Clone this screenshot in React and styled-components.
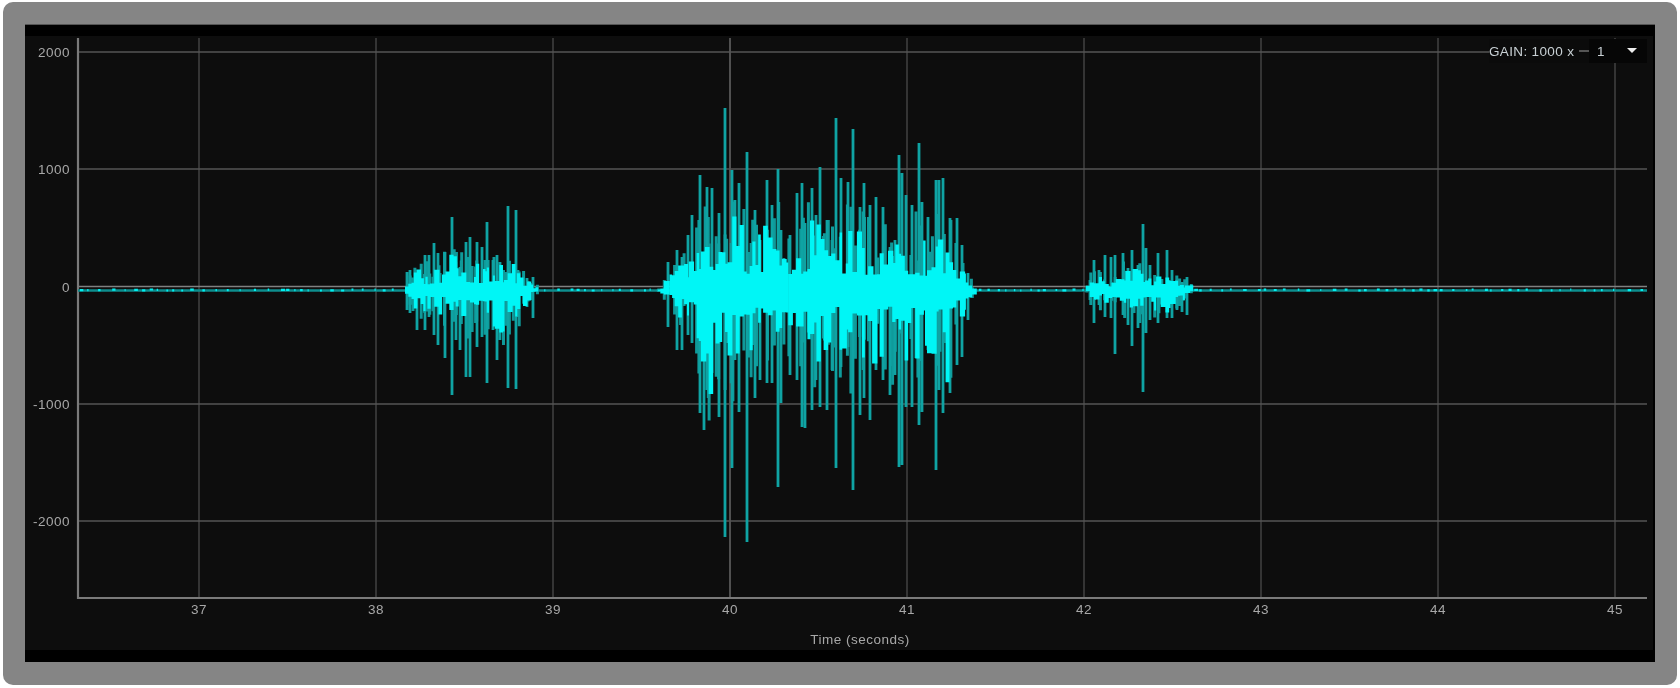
import React from "react";
import styled, { createGlobalStyle } from "styled-components";

const Global = createGlobalStyle`
  html, body { margin: 0; padding: 0; background: #fff; }
  #root { width: 1680px; height: 688px; overflow: hidden; }
`;

const Page = styled.div`
  width: 1680px;
  height: 688px;
  padding: 2px 3px 3px 3px;
  box-sizing: border-box;
  background: #fff;
`;

const Frame = styled.div`
  height: 100%;
  box-sizing: border-box;
  padding: 23px 22px;
  background: #858585;
  border-radius: 10px;
`;

const Panel = styled.div`
  position: relative;
  height: 100%;
  box-sizing: border-box;
  padding: 11px 2px 12px 0;
  background: #000;
  box-shadow: 0 -1px 0 #555;
`;

const Surface = styled.div`
  height: 100%;
  background: #0d0d0d;
`;

const Chart = styled.svg`
  display: block;
  position: absolute;
  inset: 0;
  width: 100%;
  height: 100%;
  filter: blur(0.7px);
  text {
    font-family: "Liberation Sans", Arial, sans-serif;
    font-size: 13.5px;
    letter-spacing: 0.5px;
    fill: #a8a8a8;
  }
`;

const GainBox = styled.div`
  position: absolute;
  top: 14px;
  right: 8px;
  width: 158px;
  height: 24px;
  display: flex;
  align-items: center;
  background: #0b0b0b;
  color: #c8d0d4;
  font-family: "Liberation Sans", Arial, sans-serif;
  font-size: 13.5px;
  letter-spacing: 0.35px;
  filter: blur(0.5px);
`;

const GainLabel = styled.span`
  width: 90px;
  white-space: nowrap;
`;

const GainDash = styled.span`
  width: 10px;
  height: 1.5px;
  background: #555;
`;

const GainSelect = styled.div`
  flex: 1;
  height: 100%;
  display: flex;
  align-items: center;
  justify-content: space-between;
  padding: 0 10px 0 8px;
  background: #060606;
`;

const Caret = styled.span`
  width: 0;
  height: 0;
  border-left: 5px solid transparent;
  border-right: 5px solid transparent;
  border-top: 5px solid #eee;
  margin-top: -2px;
`;

const CENTER = 290;

function rng(seed) {
  let a = seed;
  return () => {
    a |= 0;
    a = (a + 0x6d2b79f5) | 0;
    let t = Math.imul(a ^ (a >>> 15), 1 | a);
    t = (t + Math.imul(t ^ (t >>> 7), 61 | t)) ^ t;
    return ((t ^ (t >>> 14)) >>> 0) / 4294967296;
  };
}

const lerp = (pts, x) => {
  if (x <= pts[0][0]) return pts[0].slice(1);
  for (let i = 1; i < pts.length; i++) {
    if (x <= pts[i][0]) {
      const [x0, u0, d0] = pts[i - 1];
      const [x1, u1, d1] = pts[i];
      const t = (x - x0) / (x1 - x0);
      return [u0 + (u1 - u0) * t, d0 + (d1 - d0) * t];
    }
  }
  return pts[pts.length - 1].slice(1);
};

const SPIKES = [
  [452, 217, 395], [508, 206, 388], [516, 210, 389], [487, 222, 383], [434, 243, 335],
  [438, 253, 345], [470, 237, 377], [466, 242, 377], [477, 242, 347], [482, 247, 337],
  [497, 255, 360], [445, 252, 358], [460, 267, 350], [425, 255, 330], [417, 280, 330],
  [410, 270, 313], [429, 255, 317], [533, 277, 318], [527, 278, 307], [518, 270, 317],
  [407, 272, 310], [500, 262, 340], [493, 260, 330], [456, 262, 340],
  [725, 108, 537], [747, 152, 542], [778, 169, 487], [732, 170, 468], [700, 175, 413],
  [704, 257, 430], [707, 187, 390], [712, 188, 373], [739, 183, 412], [719, 213, 417],
  [692, 215, 343], [688, 235, 335], [767, 180, 383], [772, 205, 383], [755, 210, 398],
  [797, 193, 380], [802, 183, 427], [781, 230, 403], [677, 250, 350], [682, 257, 350],
  [668, 262, 327], [836, 118, 468], [853, 129, 490], [899, 155, 467], [919, 143, 425],
  [936, 180, 470], [902, 173, 465], [820, 167, 407], [805, 223, 428], [812, 188, 410],
  [827, 220, 410], [841, 178, 367], [848, 182, 347], [864, 183, 398], [860, 207, 415],
  [870, 205, 420], [876, 197, 370], [883, 207, 380], [890, 247, 395], [906, 195, 407],
  [912, 205, 407], [922, 202, 412], [928, 217, 350], [943, 178, 413], [939, 180, 390],
  [950, 218, 393], [957, 218, 365], [962, 245, 357], [968, 273, 320], [735, 200, 360],
  [760, 240, 380], [790, 235, 375], [816, 215, 380], [832, 240, 370], [895, 240, 375],
  [1143, 224, 392], [1115, 255, 354], [1132, 250, 346], [1094, 260, 323], [1105, 255, 317],
  [1111, 257, 318], [1123, 253, 315], [1146, 248, 333], [1150, 265, 320], [1158, 253, 323],
  [1167, 250, 318], [1172, 270, 318], [1187, 277, 315], [1177, 280, 310], [1138, 265, 328],
  [1128, 268, 325], [1182, 282, 312], [1099, 270, 305], [1090, 280, 300],
];

const ENVELOPES = [
  {
    from: 405, to: 537, seed: 11,
    env: [[405, 6, 6], [412, 20, 22], [430, 20, 26], [450, 34, 28], [470, 26, 44], [490, 24, 34], [510, 28, 48], [525, 12, 12], [537, 3, 3]],
  },
  {
    from: 658, to: 972, seed: 23,
    env: [[658, 2, 2], [668, 16, 14], [680, 28, 30], [692, 44, 46], [702, 66, 112], [720, 72, 84], [735, 70, 96], [750, 52, 72], [770, 72, 80], [790, 48, 66], [810, 66, 74], [830, 58, 66], [850, 60, 80], [880, 48, 66], [905, 56, 78], [925, 50, 64], [945, 60, 90], [958, 28, 28], [972, 4, 6]],
  },
  {
    from: 1086, to: 1192, seed: 37,
    env: [[1086, 4, 4], [1092, 20, 16], [1110, 12, 14], [1128, 28, 40], [1150, 16, 26], [1170, 12, 20], [1188, 6, 6], [1192, 3, 3]],
  },
];

function buildWave() {
  const mid = [];
  const core = [];
  ENVELOPES.forEach(({ from, to, seed, env }) => {
    const r = rng(seed);
    for (let x = from; x <= to; ) {
      const [u, d] = lerp(env, x);
      const w = 2 + r() * 3.5;
      const a = u * (0.28 + Math.pow(r(), 1.6) * 0.78);
      const b = d * (0.24 + Math.pow(r(), 1.6) * 0.82);
      core.push(`M${x.toFixed(1)} ${(CENTER - a).toFixed(1)}h${w.toFixed(1)}V${(CENTER + b).toFixed(1)}h${(-w).toFixed(1)}Z`);
      if (r() > 0.3) {
        const sx = (x + r() * w).toFixed(1);
        const up = u * (0.55 + r() * 0.9);
        const dn = d * (0.5 + r() * 0.85);
        mid.push(`M${sx} ${(CENTER - up).toFixed(1)}V${(CENTER + dn).toFixed(1)}`);
      }
      x += w * (0.72 + r() * 0.3);
    }
  });
  return { mid: mid.join(""), core: core.join("") };
}

function buildSpecks() {
  const r = rng(5);
  const out = [];
  for (let x = 80; x < 1646; x += 5 + r() * 10) {
    if ((x > 405 && x < 537) || (x > 658 && x < 972) || (x > 1086 && x < 1192)) continue;
    out.push(`M${x.toFixed(1)} ${(CENTER - 0.5 + r()).toFixed(1)}h${(1 + r() * 3).toFixed(1)}`);
  }
  return out.join("");
}

const WAVE = buildWave();
const SPECKS = buildSpecks();
const SPIKE_PATH = SPIKES.map(([x, t, b]) => `M${x} ${t}V${b}`).join("");

const XT = [37, 38, 39, 40, 41, 42, 43, 44, 45];
const YT = [
  [2000, 52],
  [1000, 169],
  [0, 286.5],
  [-1000, 404],
  [-2000, 521],
];
const xOf = (v) => 199 + (v - 37) * 177;

function Waveform() {
  return (
    <Chart viewBox="25 25 1630 637" preserveAspectRatio="none">
      {XT.map((v) => (
        <path key={v} d={`M${xOf(v)} 38V598`} stroke={v === 40 ? "#505050" : "#343434"} strokeWidth="2" />
      ))}
      {YT.map(([v, y]) => (
        <path key={v} d={`M78 ${y}H1647`} stroke={v === 0 ? "#808080" : "#555"} strokeWidth="1.6" />
      ))}
      <path d="M78 38V598H1647" fill="none" stroke="#7a7a7a" strokeWidth="2.2" />
      {YT.map(([v, y]) => (
        <text key={v} x="70" y={y + 5} textAnchor="end">{v}</text>
      ))}
      {XT.map((v) => (
        <text key={v} x={xOf(v)} y="614" textAnchor="middle">{v}</text>
      ))}
      <text x="860" y="644" textAnchor="middle">Time (seconds)</text>

      <path d={`M78 ${CENTER + 0.5}H1647`} stroke="#0e8e8e" strokeWidth="2.6" />
      <path d={SPECKS} stroke="#00f0f0" strokeWidth="2.2" fill="none" />
      <path d={WAVE.mid} stroke="#0f9a9a" strokeWidth="3" fill="none" />
      <path d={SPIKE_PATH} stroke="#0fa3a3" strokeWidth="2.8" fill="none" />
      <path d={WAVE.core} fill="#00f6f6" />
    </Chart>
  );
}

export default function App() {
  return (
    <Page>
      <Global />
      <Frame>
        <Panel>
          <Surface />
          <Waveform />
          <GainBox>
            <GainLabel>GAIN: 1000 x</GainLabel>
            <GainDash />
            <GainSelect>
              <span>1</span>
              <Caret />
            </GainSelect>
          </GainBox>
        </Panel>
      </Frame>
    </Page>
  );
}
